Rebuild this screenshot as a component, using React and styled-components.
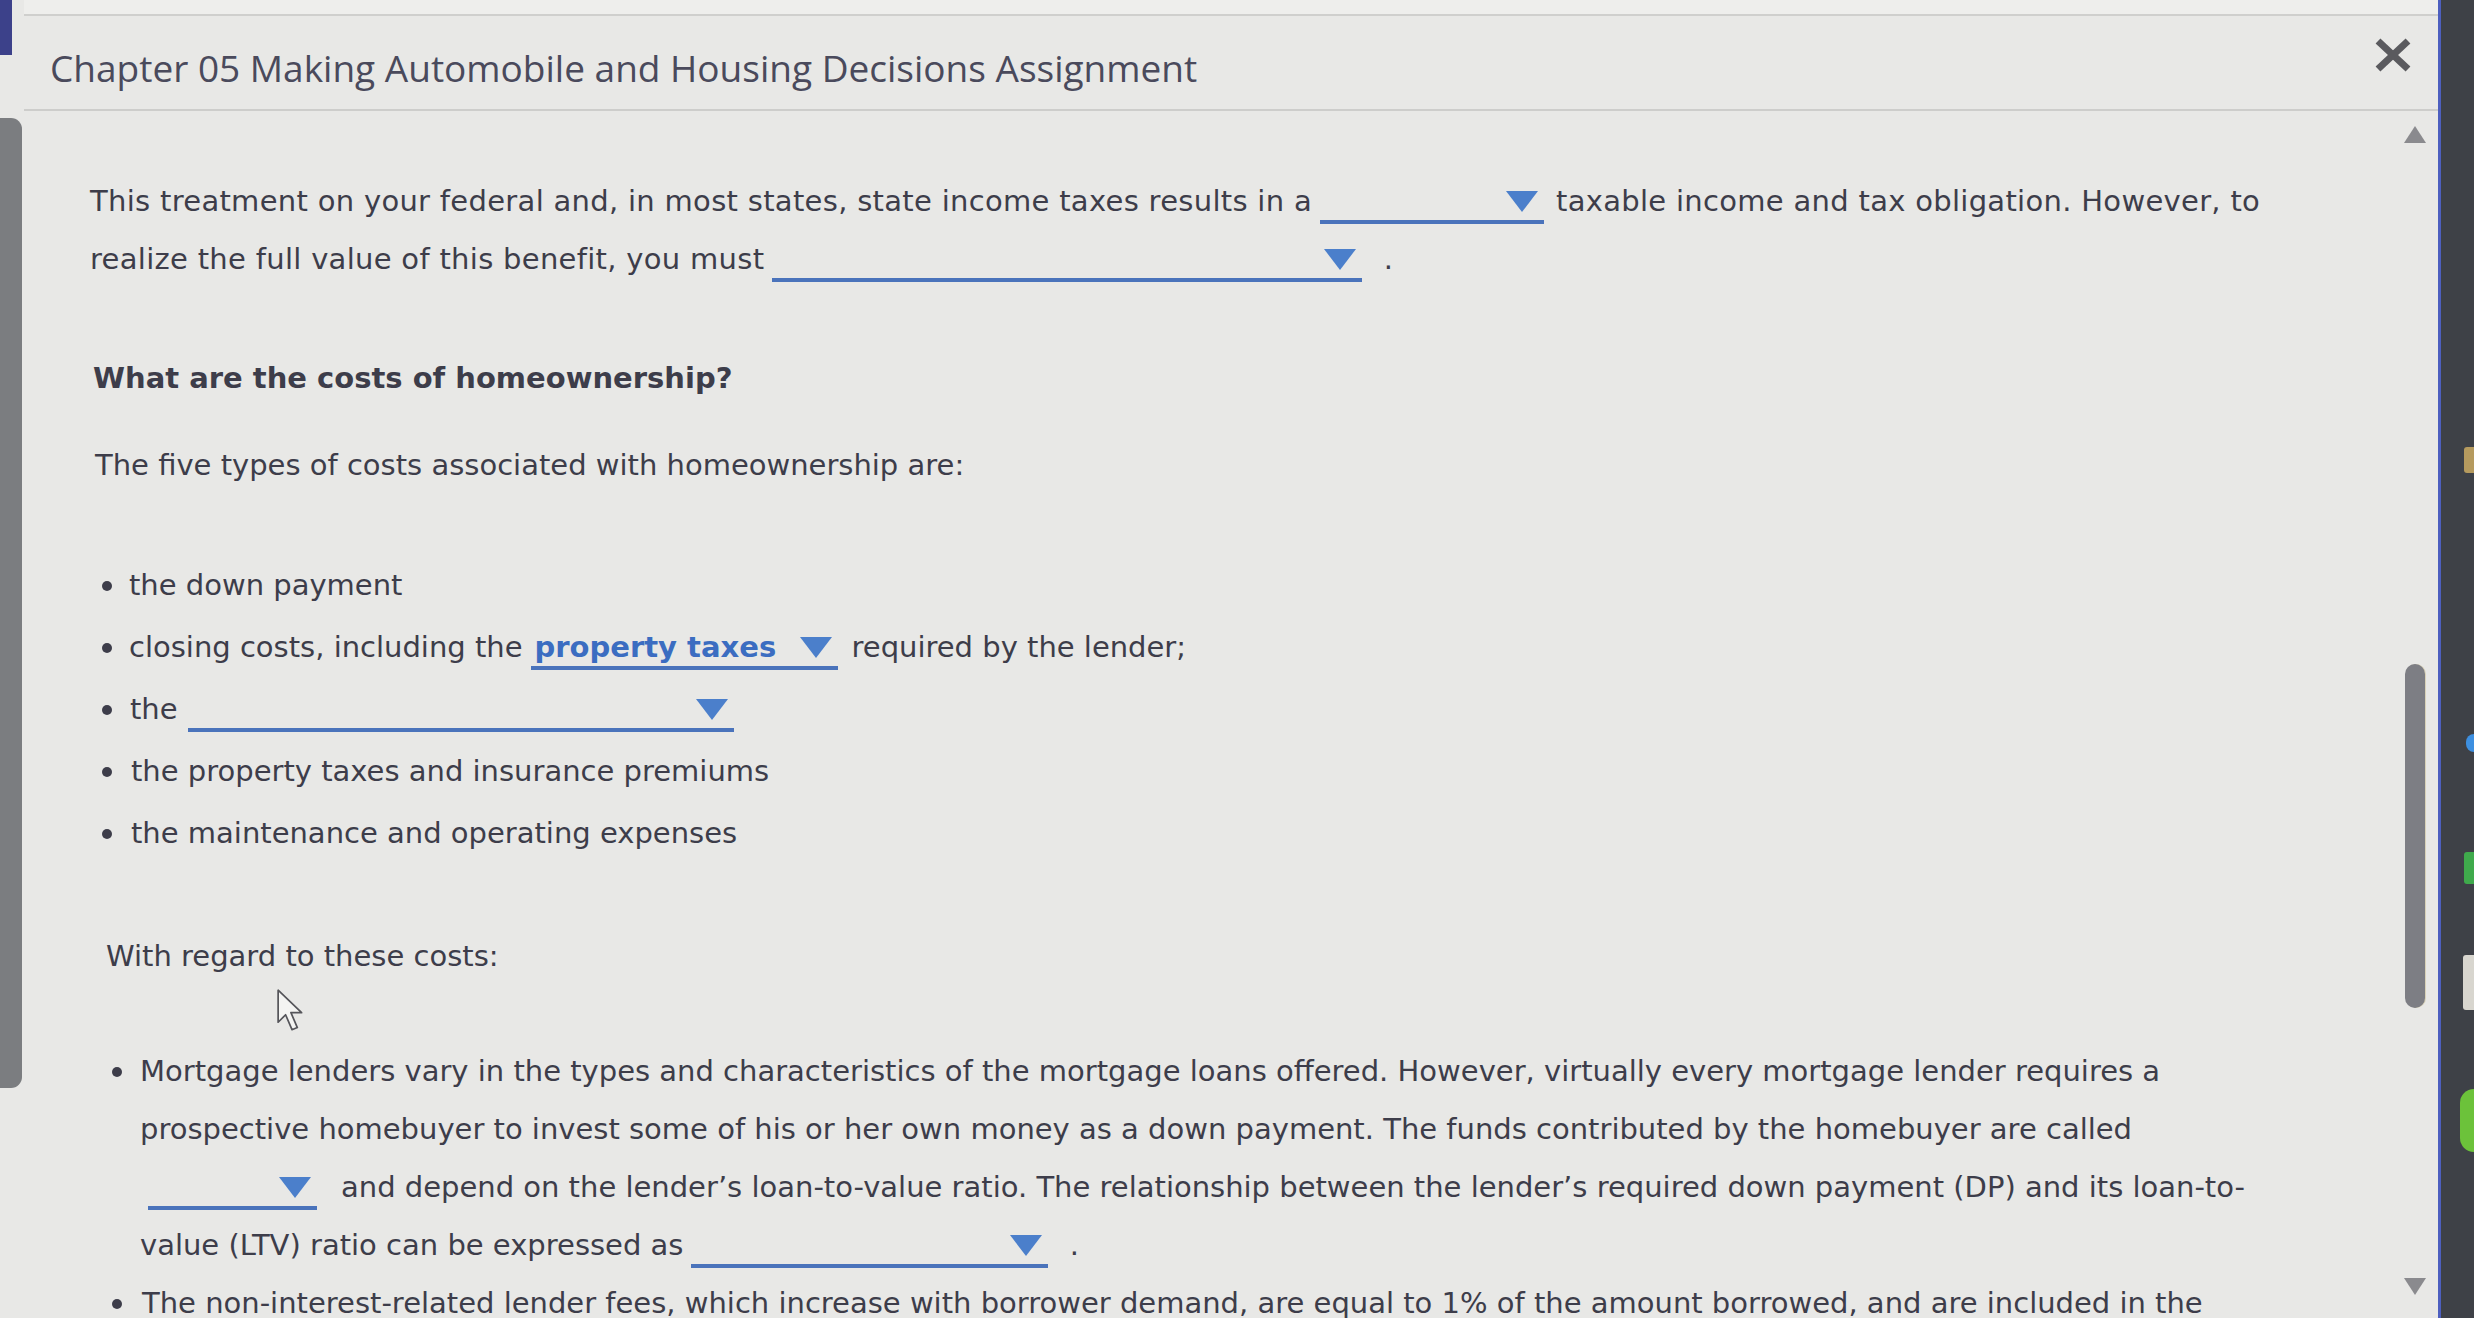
import styled, { createGlobalStyle } from 'styled-components';

const GlobalStyle = createGlobalStyle`
  html, body {
    margin: 0;
    padding: 0;
  }
  body {
    background: #e8e8e6;
    overflow: hidden;
    font-family: "DejaVu Sans", Verdana, sans-serif;
  }
`;

const INK = '#3d3d4a';

const Screen = styled.div`
  display: flex;
  width: 2474px;
  height: 1318px;
  overflow: hidden;
  background: #e8e8e6;
`;

const LeftEdge = styled.div`
  flex: none;
  width: 24px;
  display: flex;
  flex-direction: column;
  align-items: flex-start;
`;

const EdgeTab = styled.div`
  width: 12px;
  height: 55px;
  background: #3c418a;
`;

const EdgeBar = styled.div`
  margin-top: 63px;
  width: 22px;
  height: 970px;
  border-radius: 0 11px 11px 0;
  background: #7b7d80;
`;

const Window = styled.div`
  flex: 1;
  min-width: 0;
  display: flex;
  flex-direction: column;
`;

const TopStrip = styled.div`
  height: 14px;
  background: #eeeeec;
  border-bottom: 2px solid #cfcfcd;
`;

const Header = styled.header`
  height: 95px;
  display: flex;
  align-items: center;
  justify-content: space-between;
  padding: 9px 26px 0 26px;
  box-sizing: border-box;
  border-bottom: 2px solid #cdcdcb;
`;

const Title = styled.h1`
  margin: 0;
  font-family: "Open Sans", "Liberation Sans", sans-serif;
  font-weight: 400;
  font-size: 37px;
  color: #4a4a5c;
`;

const CloseIcon = styled.svg`
  width: 38px;
  height: 36px;
  margin-top: -24px;
  stroke: #5a5a5e;
  stroke-width: 7;
`;

const Body = styled.div`
  flex: 1;
  display: flex;
  min-height: 0;
`;

const Content = styled.main`
  flex: 1;
  min-width: 0;
  padding: 61px 0 0 66px;
  color: ${INK};
  font-size: 29px;
`;

const Para = styled.p`
  margin: ${(p) => p.$mt || 0}px 0 0 ${(p) => p.$ml || 0}px;
  line-height: 58px;
  white-space: nowrap;
  letter-spacing: ${(p) => p.$ls || 0}px;
`;

const Heading = styled(Para)`
  font-weight: bold;
`;

const BulletList = styled.ul`
  list-style: none;
  margin: ${(p) => p.$mt || 0}px 0 0 ${(p) => p.$ml || 0}px;
  padding: 0;
`;

const Item = styled.li`
  position: relative;
  padding-left: ${(p) => p.$indent}px;
  line-height: ${(p) => p.$lh}px;
  white-space: nowrap;
  &::before {
    content: '';
    position: absolute;
    left: 0;
    top: ${(p) => p.$lh / 2 - 4}px;
    width: 10px;
    height: 10px;
    border-radius: 50%;
    background: ${INK};
  }
`;

const Select = styled.span`
  display: inline-flex;
  align-items: baseline;
  justify-content: space-between;
  box-sizing: border-box;
  width: ${(p) => p.$w}px;
  margin: 0 ${(p) => p.$gap ?? 6}px 0 ${(p) => p.$lead ?? 4}px;
  padding: 0 6px 2px 4px;
  line-height: 34px;
  letter-spacing: 0;
  border-bottom: 4px solid #4a73bb;
`;

const Choice = styled.span`
  font-weight: bold;
  color: #3b6dc1;
`;

const Caret = styled.svg`
  flex: none;
  align-self: center;
  width: 32px;
  height: 21px;
  fill: #4b7fcb;
`;

const CursorSpot = styled.div`
  position: relative;
  height: 0;
`;

const Pointer = styled.svg`
  position: absolute;
  left: 186px;
  top: 3px;
  width: 32px;
  height: 45px;
`;

const ScrollRail = styled.div`
  flex: none;
  width: 46px;
  display: flex;
  flex-direction: column;
  align-items: center;
  padding-top: 15px;
`;

const RailArrow = styled.svg`
  width: 22px;
  height: 17px;
  fill: #8a8a8e;
  margin-top: ${(p) => p.$mt || 0}px;
`;

const Thumb = styled.div`
  margin-top: 521px;
  width: 20px;
  height: 344px;
  border-radius: 10px;
  background: #7d7e84;
  box-shadow: 1px 0 0 #d9d2b8;
`;

const Dock = styled.aside`
  flex: none;
  width: 33px;
  background: #3e4147;
  border-left: 3px solid #4d5fbf;
  display: flex;
  flex-direction: column;
  align-items: flex-end;
`;

const DockIcon = styled.div`
  margin-top: ${(p) => p.$mt}px;
  width: ${(p) => p.$w}px;
  height: ${(p) => p.$h}px;
  background: ${(p) => p.$color};
  border-radius: ${(p) => p.$r || 3}px 0 0 ${(p) => p.$r || 3}px;
`;

const Dropdown = ({ w, gap, lead, value }) => (
  <Select $w={w} $gap={gap} $lead={lead}>
    <Choice>{value || '\u00a0'}</Choice>
    <Caret viewBox="0 0 32 21">
      <polygon points="0,0 32,0 16,21" />
    </Caret>
  </Select>
);

export default function App() {
  return (
    <>
      <GlobalStyle />
      <Screen>
        <LeftEdge>
          <EdgeTab />
          <EdgeBar />
        </LeftEdge>
        <Window>
          <TopStrip />
          <Header>
            <Title>Chapter 05 Making Automobile and Housing Decisions Assignment</Title>
            <CloseIcon viewBox="0 0 38 36">
              <line x1="4" y1="4" x2="34" y2="32" />
              <line x1="34" y1="4" x2="4" y2="32" />
            </CloseIcon>
          </Header>
          <Body>
            <Content>
              <Para $ls={0.3}>
                This treatment on your federal and, in most states, state income taxes results in a
                <Dropdown w={224} gap={12} lead={8} />
                taxable income and tax obligation. However, to
                <br />
                realize the full value of this benefit, you must
                <Dropdown w={590} gap={12} lead={8} /> .
              </Para>

              <Heading $mt={61} $ml={3}>What are the costs of homeownership?</Heading>

              <Para $mt={29} $ml={5}>The five types of costs associated with homeownership are:</Para>

              <BulletList $mt={60} $ml={12}>
                <Item $lh={62} $indent={27}>the down payment</Item>
                <Item $lh={62} $indent={27}>
                  closing costs, including the
                  <Dropdown w={307} gap={14} lead={8} value="property taxes" />
                  required by the lender;
                </Item>
                <Item $lh={62} $indent={28}>
                  the
                  <Dropdown w={546} lead={10} />
                </Item>
                <Item $lh={62} $indent={29}>the property taxes and insurance premiums</Item>
                <Item $lh={62} $indent={29}>the maintenance and operating expenses</Item>
              </BulletList>

              <Para $mt={63} $ml={16}>With regard to these costs:</Para>

              <CursorSpot>
                <Pointer viewBox="0 0 30 42">
                  <path
                    d="M2 2 L2 32 L9 25 L15 39 L20 37 L14 23 L24 23 Z"
                    fill="#f4f4f2"
                    stroke="#55555a"
                    strokeWidth="1.6"
                    strokeLinejoin="round"
                  />
                </Pointer>
              </CursorSpot>

              <BulletList $mt={57} $ml={22}>
                <Item $lh={58} $indent={28}>
                  Mortgage lenders vary in the types and characteristics of the mortgage loans offered. However, virtually every mortgage lender requires a
                  <br />
                  prospective homebuyer to invest some of his or her own money as a down payment. The funds contributed by the homebuyer are called
                  <br />
                  <Dropdown w={169} gap={24} lead={8} />
                  and depend on the lender’s loan-to-value ratio. The relationship between the lender’s required down payment (DP) and its loan-to-
                  <br />
                  value (LTV) ratio can be expressed as
                  <Dropdown w={357} gap={12} lead={8} /> .
                </Item>
                <Item $lh={58} $indent={30}>
                  The non-interest-related lender fees, which increase with borrower demand, are equal to 1% of the amount borrowed, and are included in the
                </Item>
              </BulletList>
            </Content>
            <ScrollRail>
              <RailArrow viewBox="0 0 22 17">
                <polygon points="11,0 22,17 0,17" />
              </RailArrow>
              <Thumb />
              <RailArrow $mt={270} viewBox="0 0 22 17">
                <polygon points="0,0 22,0 11,17" />
              </RailArrow>
            </ScrollRail>
          </Body>
        </Window>
        <Dock>
          <DockIcon $mt={447} $w={10} $h={26} $color="#b59a5e" />
          <DockIcon $mt={261} $w={8} $h={18} $color="#3d8fe0" $r={9} />
          <DockIcon $mt={100} $w={10} $h={32} $color="#3faa4c" />
          <DockIcon $mt={71} $w={11} $h={55} $color="#d8d6cf" />
          <DockIcon $mt={79} $w={14} $h={63} $color="#6cc23a" $r={30} />
        </Dock>
      </Screen>
    </>
  );
}
